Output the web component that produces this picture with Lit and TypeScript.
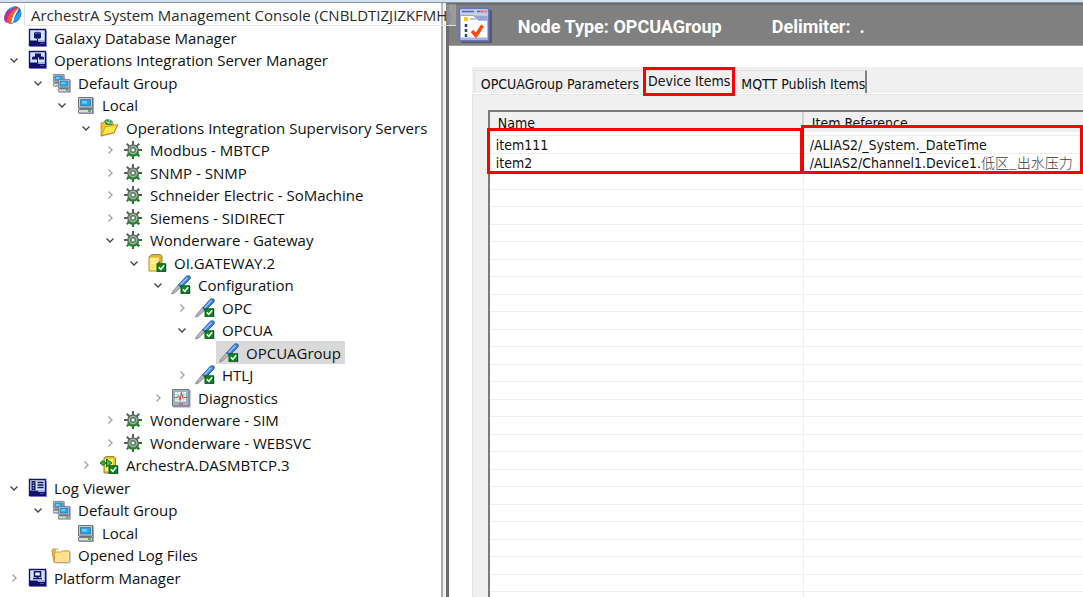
import { LitElement, html, svg, css, nothing } from "lit";
import { customElement, state } from "lit/decorators.js";
import { classMap } from "lit/directives/class-map.js";

interface TreeRow {
  depth: number;
  icon: string;
  label: string;
  open?: boolean;
  selected?: boolean;
}

const ROWS: TreeRow[] = [
  { depth: 1, icon: "database", label: "Galaxy Database Manager" },
  { depth: 1, icon: "network", label: "Operations Integration Server Manager", open: true },
  { depth: 2, icon: "group", label: "Default Group", open: true },
  { depth: 3, icon: "computer", label: "Local", open: true },
  { depth: 4, icon: "servers", label: "Operations Integration Supervisory Servers", open: true },
  { depth: 5, icon: "gear", label: "Modbus - MBTCP", open: false },
  { depth: 5, icon: "gear", label: "SNMP - SNMP", open: false },
  { depth: 5, icon: "gear", label: "Schneider Electric - SoMachine", open: false },
  { depth: 5, icon: "gear", label: "Siemens - SIDIRECT", open: false },
  { depth: 5, icon: "gear", label: "Wonderware - Gateway", open: true },
  { depth: 6, icon: "gateway", label: "OI.GATEWAY.2", open: true },
  { depth: 7, icon: "tool", label: "Configuration", open: true },
  { depth: 8, icon: "tool", label: "OPC", open: false },
  { depth: 8, icon: "tool", label: "OPCUA", open: true },
  { depth: 9, icon: "tool", label: "OPCUAGroup", selected: true },
  { depth: 8, icon: "tool", label: "HTLJ", open: false },
  { depth: 7, icon: "diagnostics", label: "Diagnostics", open: false },
  { depth: 5, icon: "gear", label: "Wonderware - SIM", open: false },
  { depth: 5, icon: "gear", label: "Wonderware - WEBSVC", open: false },
  { depth: 4, icon: "das", label: "ArchestrA.DASMBTCP.3", open: false },
  { depth: 1, icon: "log", label: "Log Viewer", open: true },
  { depth: 2, icon: "group", label: "Default Group", open: true },
  { depth: 3, icon: "computer", label: "Local" },
  { depth: 2, icon: "folder", label: "Opened Log Files" },
  { depth: 1, icon: "platform", label: "Platform Manager", open: false },
];

const ITEMS = [
  ["item111", "/ALIAS2/_System._DateTime", ""],
  ["item2", "/ALIAS2/Channel1.Device1.", "低区_出水压力"],
];

const TABS = ["OPCUAGroup Parameters", "Device Items", "MQTT Publish Items"];

const EMPTY_ROWS = 25;

const check = svg`<path d="M9.500 10h9v8h-9z" fill="#a09cf0"/>
  <rect x="9" y="9.800" width="8.500" height="7.500" fill="#0a8a1c" stroke="#045a0c"/>
  <path d="M10.800 13.300l2 2 3.500-4" fill="none" stroke="#fff" stroke-width="1.600"/>`;

const consoleFrame = svg`<path d="M2 2h17v16H2z" fill="#9a98e8"/>
  <path d="M1.500 0.500h16v16h-16z" fill="#cfe4f8" stroke="#15156e" stroke-width="1.400"/>
  <path d="M2 11.500h7l2 1.500h7V17H2z" fill="#10106a"/>
  <path d="M9 12h8M12 14.500h4" stroke="#5a66c8" stroke-width=".8"/>`;

const monitor = (x: number, y: number, s: number) => svg`<g transform="translate(${x} ${y}) scale(${s})">
  <path d="M1 1h15v16H1z" fill="#a09cf0"/>
  <path d="M.5.5h14v10.500H.5z" fill="#c9cccc" stroke="#6d7274"/>
  <path d="M2.500 2.500h10v6.500h-10z" fill="#25a3ee" stroke="#2c6d94" stroke-width=".7"/>
  <path d="M4 4h5v2.500H4z" fill="#6fd0ff"/>
  <path d="M2 11h11v1.500H2z" fill="#6b7072"/>
  <path d="M.5 12.500h14V16H.5z" fill="#dadcda" stroke="#777c7c"/>
  <path d="M10 14h3" stroke="#2ca52c" stroke-width="1.500"/></g>`;

const ICONS: Record<string, unknown> = {
  root: svg`<ellipse cx="9" cy="9" rx="9.500" ry="7.600" transform="rotate(-48 9 9)" fill="#2b5fd0"/>
    <path d="M0 12C1 6 7 1 15 1 9 4 5 9 4 17 1 17 0 14 0 12z" fill="#c8289a"/>
    <path d="M3 17C3 10 7 4 15 1 11 6 8 10 8 18z" fill="#f0602c"/>
    <path d="M7.500 17C8 11 10 6 15 2c-2 5-5 8-5.500 14.500z" fill="#fff"/>
    <path d="M9.500 16c0-5 5-8 7-12 2 5-1 10-7 12z" fill="#18a8ee"/>
    <path d="M2 6c3-4 7-6 12-5.500C10 1 6 3 2 6z" fill="#42b4f4"/>`,
  database: svg`${consoleFrame}
    <path d="M6 4v4.500c0 1.800 7 1.800 7 0V4z" fill="#15156e"/>
    <ellipse cx="9.500" cy="4" rx="3.500" ry="1.300" fill="#3a46a0"/>
    <path d="M9.500 10v3" stroke="#15156e"/>`,
  network: svg`${consoleFrame}
    <path d="M7 2.500h6V6H7zM4 6h5v2.500H4zM11 6h5v2.500h-5z" fill="#15156e"/>
    <path d="M9.500 6v6M5 6h10" stroke="#15156e"/>`,
  log: svg`${consoleFrame}
    <path d="M3.500 2h4v9h-4z" fill="#15156e"/>
    <path d="M5.500 3.500v1M5.500 6v1M5.500 8.500v1" stroke="#cfe4f8" stroke-width="1.300"/>
    <path d="M9.500 3.500h6M9.500 6h6M9.500 8.500h6" stroke="#15156e" stroke-width="1.400"/>`,
  platform: svg`${consoleFrame}
    <path d="M6.500 2.800h6v4.500h-6zM5 9.500h9" fill="#eaf4ff" stroke="#15156e" stroke-width="1.500"/>
    <path d="M9.500 7v2" stroke="#15156e" stroke-width="2"/>`,
  group: svg`${monitor(1, 0, 0.74)}${monitor(6, 5, 0.8)}`,
  computer: monitor(2, 1, 1),
  servers: svg`<path d="M1 4l5-1.500 2 2 6 .5v4L2 17H1z" fill="#f4c430" stroke="#c08a18" stroke-width=".8"/>
    <path d="M4 2l3-2 4 1 2 2-1 3H6z" fill="#3c9448"/>
    <path d="M6 2l2 2M10 1L8 4M12 4L8 4" stroke="#b8dcb8"/>
    <path d="M1.500 16.500L5 8l5-1 8-1.500-4 8z" fill="#ffe94c" stroke="#c89820" stroke-width=".9"/>
    <path d="M1 17l13-3 3.500-8" fill="none" stroke="#db6a30" stroke-width=".8"/>`,
  gear: svg`<path d="M9 0v18M0 9h18M2.800 2.800l12.400 12.400M2.800 15.200L15.200 2.800" stroke="#56625a" stroke-width="2"/>
    <path d="M9 14v4M13 13l2.200 2.200M14 9h4" stroke="#1d7a26" stroke-width="2"/>
    <circle cx="9" cy="9" r="5.800" fill="#5f6e63"/>
    <path d="M4 11.500a5.400 5.400 0 0 0 10.200-1" fill="none" stroke="#258a2d" stroke-width="2"/>
    <circle cx="9" cy="9" r="3.700" fill="none" stroke="#a9b8ac" stroke-width="1.300"/>
    <circle cx="9" cy="9" r="2.100" fill="#fff" stroke="#4c8254"/>`,
  gateway: svg`<path d="M1 3L3.500.5h9L14 2v13l-2 2H1z" fill="#d8b832" stroke="#8c7b3c" stroke-width=".9"/>
    <path d="M1.500 3.500H11V16.500H1.500z" fill="#ffe768"/>
    <path d="M3 6h6M3 9h6" stroke="#fff8c0" stroke-width="1.300"/>
    <path d="M10 8.500h2" stroke="#e03020" stroke-width="1.500"/>${check}`,
  tool: svg`<path d="M-.5 18l1.500-3 6-7 2.500 2.500-7 6.500z" fill="#b4b7bc" stroke="#777d86" stroke-width=".8"/>
    <path d="M6.500 9l7.500-8.500c1-1 3.500-1 4.200 0 .4 1 0 2.400-.8 3.200L9.500 11.500z" fill="#3a80dc" stroke="#1f4f9c" stroke-width=".8"/>
    <path d="M8.500 8.800L15.500 1.500" stroke="#8fc4ff" stroke-width="1.600"/>${check}`,
  diagnostics: svg`<path d="M1 1h17.500v17.500H1z" fill="#a09cf0"/>
    <path d="M.5.5h16.500v16.500H.5z" fill="#aab0b4" stroke="#70767c"/>
    <path d="M2.500 2.500h12v10.500h-12z" fill="#e6f4fc" stroke="#7da0b4" stroke-width=".7"/>
    <path d="M5.500 3v10M8.500 3v10M11.500 3v10M3 5.500h11M3 10.500h11" stroke="#b4d4e4" stroke-width=".6"/>
    <path d="M2.500 8.500h3l1.200-2 1.300 5 1.500-8 1.500 6 1-1h3" fill="none" stroke="#e63b3b"/>
    <path d="M7 15h4" stroke="#c03838"/>`,
  das: svg`<path d="M4 2l2-1.500h8L15.500 2v13l-2 2H4z" fill="#e2c52c" stroke="#8c7b2c" stroke-width=".9"/>
    <path d="M5 3h8v12H5z" fill="#ffef60"/>
    <path d="M0 7l3-2.500L6 7 3 9.500z" fill="#27b42b" stroke="#0b5c12" stroke-width=".8"/>
    <path d="M6.500 3l5.500 4-5.500 4z" fill="#35c838" stroke="#0b5c12" stroke-width=".9"/>${check}`,
  folder: svg`<path d="M0 5l1-2h5l1.500 2H16v11H2z" fill="#e9b949" stroke="#b98428" stroke-width=".8"/>
    <path d="M4 3.500h9V6H4z" fill="#fff"/>
    <path d="M2.500 7.500L4 6h5l1-1h7.500v9.500L16 16.500H2.500z" fill="#ffe38c" stroke="#bf8d30" stroke-width=".8"/>
    <path d="M18.200 6v11H4" fill="none" stroke="#a8a0e8" stroke-width=".8"/>`,
};

@customElement("console-icon")
export class ConsoleIcon extends LitElement {
  static properties = { name: {} };
  declare name: string;
  static styles = css`
    :host { display: block; flex: none; width: 18px; height: 18px; }
    .glyph { display: block; width: 18px; height: 18px; overflow: visible; }
  `;
  render() {
    return html`<svg class="glyph" viewBox="0 0 18 18" aria-hidden="true">${ICONS[this.name]}</svg>`;
  }
}

@customElement("console-tree")
export class ConsoleTree extends LitElement {
  static styles = css`
    :host { display: block; min-width: 0; padding-top: 1px; background: #fff;
      font: 15px/22px "Open Sans", "Noto Sans", sans-serif; color: #111; }
    .tree { list-style: none; margin: 0; padding: 0; }
    .row { display: flex; height: 22px; }
    .row:nth-child(even) { height: 23px; }
    .toggle { flex: none; width: 20px; padding: 0; border: 0; background: none;
      display: flex; align-items: center; justify-content: center; }
    .spacer { flex: none; width: 20px; }
    .chevron { width: 8px; height: 8px; fill: none; stroke: #a0a0a0; stroke-width: 1.3; }
    .chevron.open { stroke: #404040; }
    .node { display: flex; align-items: center; gap: 8px; padding: 0 4px; white-space: nowrap; }
    .node.selected { background: #d9d9d9; }
    .root { position: relative; z-index: 2; }
    .tip { align-self: stretch; padding: 0 4px 0 6px; margin-left: -6px; color: #2b2b2b;
      background: rgba(255, 255, 255, 0.22); border-bottom: 1px solid #e2e2e2; border-left: 1px solid #e2e2e2; }
    .fade { color: #8c8c8c; }
  `;
  render() {
    return html`<ul class="tree" role="tree">
      <li class="row root" role="treeitem">
        <div class="node">
          <console-icon name="root"></console-icon>
          <span class="tip">ArchestrA System Management Console (CNBLDTIZJIZKFMH<span class="fade">)</span></span>
        </div>
      </li>
      ${ROWS.map(
        (r) => html`<li class="row" role="treeitem" style="padding-left:${(r.depth - 1) * 24 + 4}px">
          ${r.open === undefined
            ? html`<span class="spacer"></span>`
            : html`<button class="toggle" aria-label=${(r.open ? "Collapse " : "Expand ") + r.label}>
                <svg class=${classMap({ chevron: true, open: r.open })} viewBox="0 0 8 8">
                  <path d=${r.open ? "M.5 2.500L4 6l3.500-3.500" : "M2.500.5L6 4 2.500 7.500"} />
                </svg>
              </button>`}
          <div class=${classMap({ node: true, selected: !!r.selected })}>
            <console-icon name=${r.icon}></console-icon><span>${r.label}</span>
          </div>
        </li>`
      )}
    </ul>`;
  }
}

@customElement("node-editor")
export class NodeEditor extends LitElement {
  @state() private active = 1;
  static styles = css`
    :host { display: flex; flex-direction: column; min-width: 0; background: #fff; color: #111;
      font: 14px/18px "DejaVu Sans Condensed", "Noto Sans CJK SC", sans-serif; }
    .head { display: flex; align-items: center; height: 43px; padding-left: 9px;
      border-bottom: 1px solid #a0a0a0; border-top: 2px solid #6c6c6c; background: #808080; color: #fff; box-sizing: border-box;
      font: bold 18px/24px Roboto, "Liberation Sans", sans-serif; white-space: pre; }
    .emblem { flex: none; width: 34px; height: 36px; margin-right: 26px; }
    .type { margin-right: 50px; }
    .type, .delimiter { padding-top: 3px; }
    .body { flex: 1; display: flex; flex-direction: column; min-height: 0; margin: 21px 0 0 23px;
      background: #f0f0f0; }
    .tabs { display: flex; height: 27px; padding: 3px 0 0 2px; border-bottom: 1px solid #fff;
      box-sizing: border-box; }
    .tab { flex: none; padding: 3px 4px 0 6px; border: 0; border-left: 1px solid #e2e2e2; border-top: 1px solid #e2e2e2;
      background: #f0f0f0; color: inherit; font: inherit; white-space: nowrap; }
    .tab.last { border-right: 2px solid #808080; padding-right: 0; }
    .tab.active { padding: 0 4px 2px; position: relative; }
    .mark { position: absolute; border: 3px solid #f00; pointer-events: none; z-index: 1; }
    .mark-tab { inset: -4px -1px -3px -1px; }
    .mark-names { top: 16px; left: -3px; width: 310px; height: 40px; }
    .mark-refs { top: 13px; left: 311px; right: 0; height: 43px; }
    .pane { flex: 1; display: flex; min-height: 0; padding: 15px 0 0 15px; border-left: 1px solid #e2e2e2;
      border-top: 1px solid #e6e6e6; }
    .list { position: relative; flex: 1; min-width: 0; border-top: 2px solid #7a7a7a;
      border-left: 2px solid #7a7a7a; background: #fff; }
    .grid { width: 100%; border-collapse: separate; border-spacing: 0; table-layout: fixed; }
    .names { width: 314px; }
    .grid th { height: 24px; padding: 3px 0 0 8px; box-sizing: border-box; font-weight: normal; line-height: 16px;
      text-align: left; vertical-align: top; background: linear-gradient(#f0f0f0 20px, #fff 20px); border-bottom: 1px solid #eee; }
    .grid th:first-child { border-right: 2px solid #d0d0d0; }
    .grid td { height: 17px; padding: 0 0 0 6px; box-sizing: border-box; line-height: 16px; white-space: nowrap;
      border-bottom: 1px solid #eee; }
    .grid tr:nth-child(odd) td { height: 18px; }
    .grid td:first-child { border-right: 1px solid #eee; }
    .cjk { font-family: "Noto Sans CJK SC", sans-serif; font-weight: 300; color: #3c3c3c; }
  `;
  render() {
    return html`<header class="head">
        <svg class="emblem" viewBox="0 0 34 36" aria-hidden="true">
          <path d="M3 3h31v33H3z" fill="#555a68" />
          <path d="M1.500 1.500h29v32h-29z" fill="#fff" stroke="#6674b8" stroke-width="2" />
          <path d="M2.500 2.500h27v7h-27z" fill="#c4cdec" />
          <path d="M4 4.500h12M19 4.500h3" stroke="#5564a8" stroke-width="1.500" />
          <path d="M22.500 4.500h3M26.500 4.500h2" stroke="#e8604c" stroke-width="2" />
          <path d="M15.500 8.500l5 5h9V9z" fill="#98a4d6" />
          <path d="M2.500 8.500h13l5 4.500h9" fill="none" stroke="#98a4d6" />
          <path d="M3 9h12l4 4v2H3z" fill="#fff" />
          <path d="M6 10h4v4H6z" fill="#ffcc18" />
          <path d="M12 12h6" stroke="#c2c2c2" stroke-width="2" />
          <path d="M8 17v3M8 22v3M8 27v3" stroke="#34417c" stroke-width="2.500" />
          <path d="M14 24l4 4.500 6.500-10" fill="none" stroke="#fa4a12" stroke-width="3.500" />
          <path d="M2.500 31.500h27" stroke="#a5b0df" stroke-width="2" />
        </svg>
        <span class="type">Node Type: OPCUAGroup</span><span class="delimiter">Delimiter:  .</span>
      </header>
      <section class="body">
        <div class="tabs" role="tablist">
          ${TABS.map(
            (t, i) => html`<button
              class=${classMap({ tab: true, active: i === this.active, last: i === TABS.length - 1 })}
              role="tab"
              aria-selected=${i === this.active}
              @click=${() => (this.active = i)}
            >${t}${i === this.active ? html`<span class="mark mark-tab"></span>` : nothing}</button>`
          )}
        </div>
        <div class="pane">
          <div class="list">
            <table class="grid">
              <colgroup><col class="names" /><col /></colgroup>
              <thead><tr><th>Name</th><th>Item Reference</th></tr></thead>
              <tbody>
                ${ITEMS.map(([n, r, tag]) => html`<tr><td>${n}</td><td>${r}<span class="cjk">${tag}</span></td></tr>`)}
                ${Array.from({ length: EMPTY_ROWS }, () => html`<tr><td></td><td></td></tr>`)}
              </tbody>
            </table>
            <span class="mark mark-names"></span>
            <span class="mark mark-refs"></span>
          </div>
        </div>
      </section>`;
  }
}

@customElement("app-root")
export class AppRoot extends LitElement {
  static styles = css`
    :host { display: flex; flex-direction: column; height: 100vh; overflow: hidden; box-sizing: border-box;
      border-top: 2px solid #d3e2f2; background: #fff; }
    .split { flex: 1; display: grid; grid-template-columns: 41fr 8px 59fr; min-height: 0;
      border-top: 1px solid #8c929a; }
    .pane { min-width: 0; min-height: 0; overflow: hidden; }
    .nav { overflow: visible; }
    .bar { border-left: 2px solid #a4a8b2; border-right: 3px solid #6c6c6c; background: #f0f0f0; }
  `;
  render() {
    return html`<main class="split">
      <console-tree class="pane nav"></console-tree>
      <div class="bar"></div>
      <node-editor class="pane"></node-editor>
    </main>`;
  }
}
